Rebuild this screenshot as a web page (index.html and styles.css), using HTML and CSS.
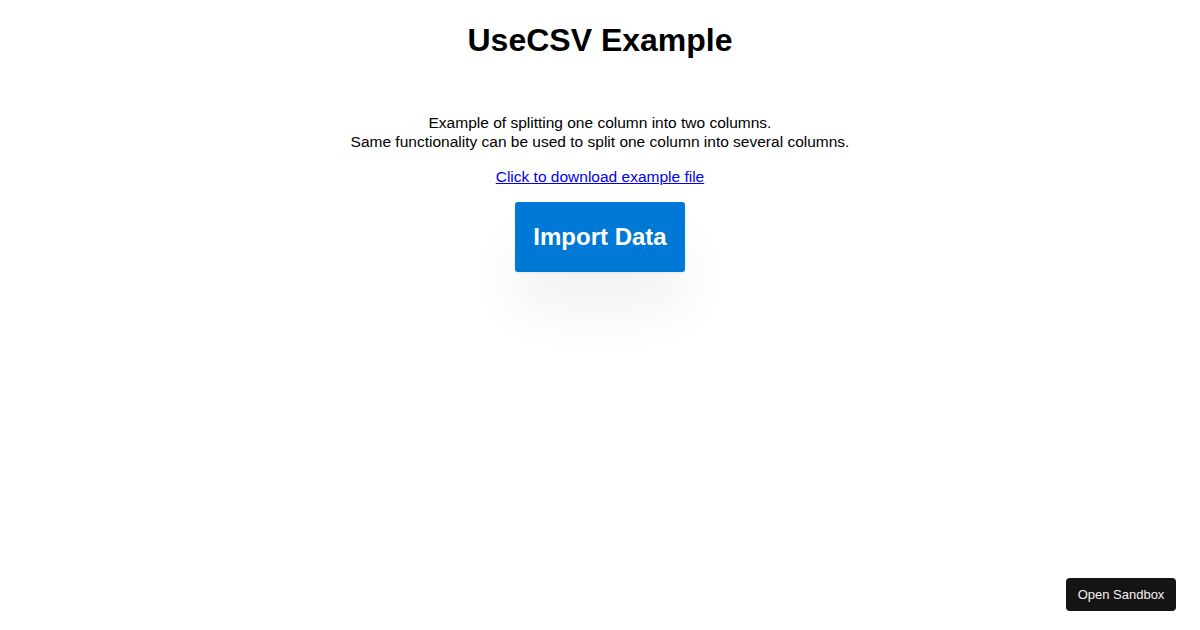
FILE: index.html
```html
<!DOCTYPE html>
<html lang="en">
<head>
<meta charset="utf-8">
<title>UseCSV Example</title>
<link rel="stylesheet" href="styles.css">
</head>
<body>
<main class="page">
  <h1 class="title">UseCSV Example</h1>
  <section class="content">
    <p class="desc">Example of splitting one column into two columns.<br>Same functionality can be used to split one column into several columns.</p>
    <p class="download"><a href="#">Click to download example file</a></p>
    <button class="import-btn" type="button">Import Data</button>
  </section>
</main>
<button class="sandbox-btn" type="button">Open Sandbox</button>
</body>
</html>
```
FILE: styles.css
```css
html, body {
  margin: 0;
  padding: 0;
  background: #ffffff;
}
body {
  min-height: 100vh;
  font-family: "Liberation Sans", Arial, sans-serif;
  color: #000000;
}
.page {
  display: flex;
  flex-direction: column;
  align-items: center;
  min-height: 100vh;
  box-sizing: border-box;
  padding-top: 22px;
  text-align: center;
}
.title {
  margin: 0;
  font-size: 32px;
  font-weight: bold;
  line-height: 37px;
}
.content {
  margin-top: 54px;
  display: flex;
  flex-direction: column;
  align-items: center;
}
.desc {
  margin: 0;
  font-size: 15.5px;
  line-height: 19px;
}
.download {
  margin: 16px 0;
  font-size: 15.5px;
  line-height: 19px;
}
.download a {
  color: #0000ee;
  text-decoration: underline;
}
.import-btn {
  font-family: "Liberation Sans", Arial, sans-serif;
  font-size: 24px;
  font-weight: bold;
  line-height: 28px;
  color: #ffffff;
  background: #0079d6;
  border: none;
  border-radius: 3px;
  padding: 21px 18px;
  width: 170px;
  height: 70px;
  box-shadow: 0 1px 2px rgba(0, 0, 0, 0.08), 0 40px 50px rgba(0, 0, 0, 0.05);
  cursor: pointer;
}
.sandbox-btn {
  position: fixed;
  right: 24px;
  bottom: 19px;
  width: 110px;
  height: 33px;
  padding: 0;
  border: none;
  border-radius: 4px;
  background: #141414;
  color: #f2f2f2;
  font-family: "Liberation Sans", Arial, sans-serif;
  font-size: 13px;
  cursor: pointer;
}
```
